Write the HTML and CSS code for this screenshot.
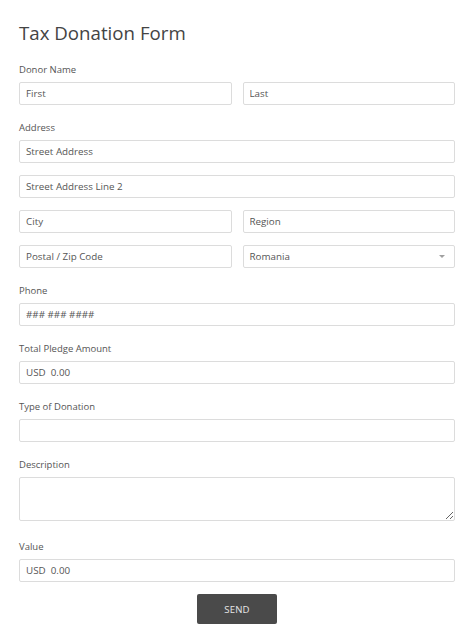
FILE: index.html
```html
<!DOCTYPE html>
<html lang="en">
<head>
<meta charset="utf-8">
<title>Tax Donation Form</title>
<link rel="stylesheet" href="styles.css">
</head>
<body>
<form class="form">
  <h1 class="title">Tax Donation Form</h1>

  <div class="group">
    <label class="label">Donor Name</label>
    <div class="row">
      <input class="input" type="text" placeholder="First">
      <input class="input" type="text" placeholder="Last">
    </div>
  </div>

  <div class="group">
    <label class="label">Address</label>
    <div class="stack">
      <input class="input" type="text" placeholder="Street Address">
      <input class="input" type="text" placeholder="Street Address Line 2">
      <div class="row">
        <input class="input" type="text" placeholder="City">
        <input class="input" type="text" placeholder="Region">
      </div>
      <div class="row">
        <input class="input" type="text" placeholder="Postal / Zip Code">
        <div class="select">
          <span class="select-text">Romania</span>
          <span class="caret"></span>
        </div>
      </div>
    </div>
  </div>

  <div class="group">
    <label class="label">Phone</label>
    <input class="input" type="text" placeholder="### ### ####">
  </div>

  <div class="group">
    <label class="label">Total Pledge Amount</label>
    <div class="input value">USD&nbsp;&nbsp;0.00</div>
  </div>

  <div class="group">
    <label class="label">Type of Donation</label>
    <input class="input" type="text">
  </div>

  <div class="group desc">
    <label class="label">Description</label>
    <textarea class="textarea"></textarea>
  </div>

  <div class="group last">
    <label class="label">Value</label>
    <div class="input value">USD&nbsp;&nbsp;0.00</div>
  </div>

  <div class="actions">
    <button class="button" type="button">SEND</button>
  </div>
</form>
</body>
</html>
```

FILE: styles.css
```css
html, body {
  margin: 0;
  padding: 0;
  background: #ffffff;
}

body {
  font-family: "Open Sans", "Liberation Sans", sans-serif;
  color: #555555;
}

.form {
  display: flex;
  flex-direction: column;
  padding: 19px 19px 0 19px;
}

.title {
  margin: 0 0 15px 0;
  font-size: 18.7px;
  font-weight: 400;
  line-height: 28px;
  color: #444444;
}

.group {
  display: flex;
  flex-direction: column;
  margin-bottom: 15px;
}

.group.desc {
  margin-bottom: 18px;
}

.group.last {
  margin-bottom: 12px;
}

.label {
  display: block;
  font-size: 9.5px;
  line-height: 16px;
  margin-bottom: 4px;
  color: #555555;
}

.stack {
  display: flex;
  flex-direction: column;
  gap: 12px;
}

.row {
  display: grid;
  grid-template-columns: 1fr 1fr;
  column-gap: 11px;
}

.input,
.select,
.textarea {
  box-sizing: border-box;
  width: 100%;
  height: 23px;
  margin: 0;
  padding: 0 6px;
  border: 1px solid #dcdcdc;
  border-radius: 2px;
  background: #ffffff;
  font-family: "Open Sans", "Liberation Sans", sans-serif;
  font-size: 9.8px;
  color: #555555;
  outline: none;
}

.input::placeholder {
  color: #555555;
  opacity: 1;
}

.value {
  display: flex;
  align-items: center;
}

.select {
  display: flex;
  align-items: center;
  justify-content: space-between;
  padding-right: 9px;
}

.caret {
  width: 0;
  height: 0;
  border-left: 3px solid transparent;
  border-right: 3px solid transparent;
  border-top: 3px solid #a0a0a0;
}

.textarea {
  display: block;
  height: 44px;
  padding: 5px 6px;
  resize: vertical;
}

.actions {
  display: flex;
  justify-content: center;
}

.button {
  width: 80px;
  height: 30px;
  border: none;
  border-radius: 2px;
  background: #4a4a4a;
  color: #e6e6e6;
  font-family: "Open Sans", "Liberation Sans", sans-serif;
  font-size: 9.6px;
  letter-spacing: 0.2px;
  cursor: pointer;
}
```
